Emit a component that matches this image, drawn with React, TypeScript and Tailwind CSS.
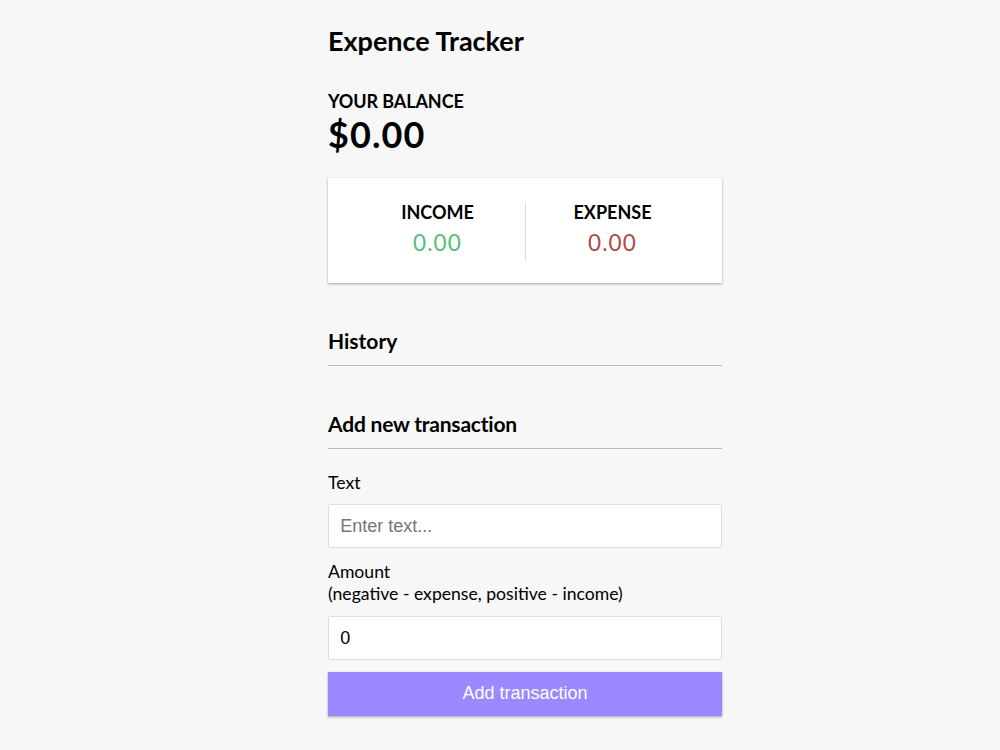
import React from "react";

export default function App() {
  const shadow = "shadow-[0_1px_3px_rgba(0,0,0,0.12),0_1px_2px_rgba(0,0,0,0.24)]";
  return (
    <div className="min-h-screen bg-[#f7f7f7] flex justify-center pl-[50px] font-['Lato',sans-serif] leading-[1.2] text-black">
      <div className="w-[394px] pt-[25px] pb-[34px]">
        <h2 className="text-[27px] font-bold">Expence Tracker</h2>

        <h4 className="mt-[34px] text-[18px] font-bold uppercase tracking-[-0.1px]">Your Balance</h4>
        <h1 className="text-[36px] font-bold tracking-[1.1px]">$0.00</h1>

        <div className={`mt-[22px] bg-white ${shadow} pt-[23.5px] pb-[21.5px] px-[22.5px] flex`}>
          <div className="flex-1 text-center border-r border-[#dedede]">
            <h4 className="text-[18px] font-bold uppercase">Income</h4>
            <p className="my-[5.6px] text-[22.5px] leading-[27px] tracking-[1.1px] text-[#4fbf78]">0.00</p>
          </div>
          <div className="flex-1 text-center">
            <h4 className="text-[18px] font-bold uppercase">Expense</h4>
            <p className="my-[5.6px] text-[22.5px] leading-[27px] tracking-[1.1px] text-[#ad4a42]">0.00</p>
          </div>
        </div>

        <h3 className="mt-[45px] text-[21px] leading-[25.3px] font-bold pb-[12px] border-b border-[#bbb]">History</h3>
        <ul className="list-none p-0 m-0"></ul>

        <h3 className="mt-[45px] text-[21px] leading-[25.3px] font-bold tracking-[-0.2px] pb-[11px] border-b border-[#bbb]">Add new transaction</h3>

        <form onSubmit={(e) => e.preventDefault()}>
          <div>
            <label className="block mt-[23px] text-[17.6px] leading-[21.6px]">Text</label>
            <input
              type="text"
              placeholder="Enter text..."
              className="block mt-[11px] w-full h-[44px] px-[11.25px] bg-white border border-[#dedede] rounded-[2px] text-[18px] font-['Liberation_Sans',Arial,sans-serif] placeholder:text-[#757575] outline-none"
            />
          </div>
          <div>
            <label className="block mt-[13px] text-[17.6px] leading-[22px]">
              Amount <br />
              (negative - expense, positive - income)
            </label>
            <input
              type="number"
              defaultValue="0"
              className="block mt-[11px] w-full h-[44px] px-[11.25px] bg-white border border-[#dedede] rounded-[2px] text-[18px] text-black font-['Liberation_Sans',Arial,sans-serif] outline-none"
            />
          </div>
          <button
            type="submit"
            className={`block mt-[12px] w-full h-[44px] bg-[#9c88ff] ${shadow} text-white text-[18px] font-['Liberation_Sans',Arial,sans-serif]`}
          >
            Add transaction
          </button>
        </form>
      </div>
    </div>
  );
}
